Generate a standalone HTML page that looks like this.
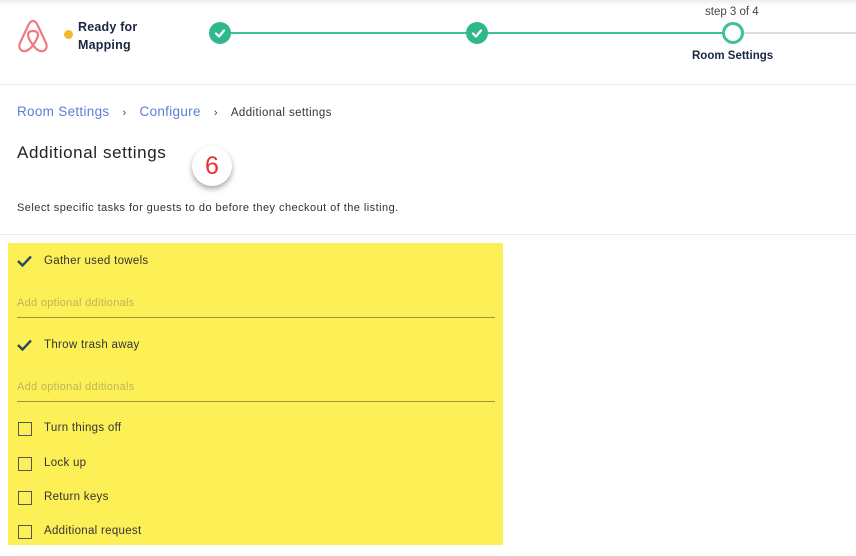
<!DOCTYPE html>
<html><head><style>
*{margin:0;padding:0;box-sizing:border-box}
body{width:856px;height:556px;overflow:hidden;background:#fff;font-family:"Liberation Sans",sans-serif;position:relative;color:#1f2a3a}
.a{position:absolute;white-space:nowrap}
.t{font-size:11.5px;color:#333;letter-spacing:0.3px}
.cb{width:14px;height:14px;border:1.5px solid #555}
</style></head><body>
<div class="a" style="left:0;top:0;width:856px;height:6px;background:linear-gradient(#eee,#fff)"></div>
<div class="a" style="left:0;top:84px;width:856px;height:1px;background:#ececec"></div>
<svg class="a" style="left:16px;top:18px" width="34" height="36" viewBox="0 0 34 36"><path d="M17 3C14 3 13 6 11 10L4 25C2 30 5 34 10 33C13 32 15 30 17 27C19 30 21 32 24 33C29 34 32 30 30 25L23 10C21 6 20 3 17 3Z M17 27C14 23 12 20 12 17C12 14 14 13 17 13C20 13 22 14 22 17C22 20 20 23 17 27Z" fill="none" stroke="#f07a80" stroke-width="2.2" stroke-linejoin="round"/></svg>
<div class="a" style="left:64px;top:30px;width:9px;height:9px;border-radius:50%;background:#f5b92d"></div>
<div class="a" style="left:78px;top:18px;font-size:12.5px;font-weight:bold;line-height:18px;color:#1c2541;letter-spacing:0.2px">Ready for<br>Mapping</div>
<div class="a" style="left:220px;top:32px;width:513px;height:2px;background:#3fbf9a"></div>
<div class="a" style="left:744px;top:32px;width:112px;height:2px;background:#ddd"></div>
<div class="a" style="left:209px;top:22px;width:22px;height:22px;border-radius:50%;background:#2fb88e"><svg width="22" height="22"><path d="M7 11.5l3 3 5-6" fill="none" stroke="#fff" stroke-width="2.2" stroke-linecap="round" stroke-linejoin="round"/></svg></div>
<div class="a" style="left:466px;top:22px;width:22px;height:22px;border-radius:50%;background:#2fb88e"><svg width="22" height="22"><path d="M7 11.5l3 3 5-6" fill="none" stroke="#fff" stroke-width="2.2" stroke-linecap="round" stroke-linejoin="round"/></svg></div>
<div class="a" style="left:722px;top:22px;width:22px;height:22px;border-radius:50%;background:#fff;border:3px solid #3fbf9a"></div>
<div class="a" style="left:705px;top:6px;font-size:11.5px;color:#444">step 3 of 4</div>
<div class="a" style="left:692px;top:50px;font-size:11.5px;font-weight:bold;color:#1c2541">Room Settings</div>
<div class="a" style="left:17px;top:104px;font-size:13.5px;color:#5a7fd8;letter-spacing:0.3px">Room Settings <span style="color:#444;font-size:11px;margin:0 9px">›</span> Configure <span style="color:#444;font-size:11px;margin:0 9px">›</span> <span style="color:#333;font-size:11.5px;letter-spacing:0.4px">Additional settings</span></div>
<div class="a" style="left:17px;top:143px;font-size:17px;color:#222;letter-spacing:0.6px">Additional settings</div>
<div class="a" style="left:192px;top:146px;width:40px;height:40px;border-radius:50%;background:#fff;box-shadow:0 3px 6px rgba(0,0,0,.35);color:#e8302f;font-size:25px;text-align:center;line-height:40px">6</div>
<div class="a" style="left:17px;top:202px;font-size:11px;color:#333;letter-spacing:0.45px">Select specific tasks for guests to do before they checkout of the listing.</div>
<div class="a" style="left:0;top:234px;width:856px;height:1px;background:#ececec"></div>
<div class="a" style="left:8px;top:243px;width:495px;height:302px;background:#fdf056"></div>
<svg class="a" style="left:16px;top:254px" width="18" height="14"><path d="M2 7l4.5 4.5L15 2.5" fill="none" stroke="#2e4a5a" stroke-width="2.4"/></svg>
<div class="a t" style="left:44px;top:255px">Gather used towels</div>
<div class="a" style="left:17px;top:297px;font-size:11px;color:#bdb45a;letter-spacing:0.3px">Add optional dditionals</div>
<div class="a" style="left:17px;top:317px;width:478px;height:1px;background:#9a9440"></div>
<svg class="a" style="left:16px;top:338px" width="18" height="14"><path d="M2 7l4.5 4.5L15 2.5" fill="none" stroke="#2e4a5a" stroke-width="2.4"/></svg>
<div class="a t" style="left:44px;top:339px">Throw trash away</div>
<div class="a" style="left:17px;top:381px;font-size:11px;color:#bdb45a;letter-spacing:0.3px">Add optional dditionals</div>
<div class="a" style="left:17px;top:401px;width:478px;height:1px;background:#9a9440"></div>
<div class="a cb" style="left:18px;top:422px"></div>
<div class="a t" style="left:44px;top:422px">Turn things off</div>
<div class="a cb" style="left:18px;top:457px"></div>
<div class="a t" style="left:44px;top:457px">Lock up</div>
<div class="a cb" style="left:18px;top:491px"></div>
<div class="a t" style="left:44px;top:491px">Return keys</div>
<div class="a cb" style="left:18px;top:525px"></div>
<div class="a t" style="left:44px;top:525px">Additional request</div>
</body></html>
